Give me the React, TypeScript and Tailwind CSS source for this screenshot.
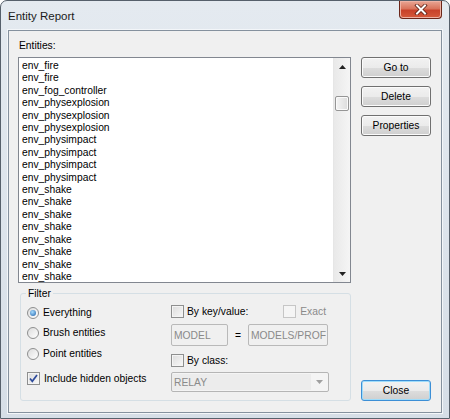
import React from "react";

const entities: string[] = [
  "env_fire",
  "env_fire",
  "env_fog_controller",
  "env_physexplosion",
  "env_physexplosion",
  "env_physexplosion",
  "env_physimpact",
  "env_physimpact",
  "env_physimpact",
  "env_physimpact",
  "env_shake",
  "env_shake",
  "env_shake",
  "env_shake",
  "env_shake",
  "env_shake",
  "env_shake",
  "env_shake",
];

const buttonClass =
  "flex h-[21px] w-[70px] items-center justify-center rounded-[3px] border border-[#707070] bg-[linear-gradient(#f2f2f2_0%,#ebebeb_50%,#dddddd_51%,#cfcfcf_100%)] text-[10.3px] text-black shadow-[inset_0_0_0_1px_#fbfbfb]";

function Radio({ checked }: { checked?: boolean }) {
  return (
    <span className="flex h-[12px] w-[12px] items-center justify-center rounded-full border border-[#8e8f8f] bg-[linear-gradient(135deg,#dcdcdc,#ffffff)]">
      {checked && (
        <span className="h-[6px] w-[6px] rounded-full bg-[radial-gradient(circle_at_40%_35%,#a6dcff,#1d5fa8)]" />
      )}
    </span>
  );
}

function Check({ checked, disabled }: { checked?: boolean; disabled?: boolean }) {
  return (
    <span
      className={
        disabled
          ? "flex h-[13px] w-[13px] items-center justify-center border border-[#c6c6c6] bg-[#f5f5f5]"
          : "flex h-[13px] w-[13px] items-center justify-center border border-[#8e8f8f] bg-[linear-gradient(135deg,#dcdcdc,#f8f8f8)] shadow-[inset_0_0_0_1px_#f4f4f4]"
      }
    >
      {checked && (
        <svg width="11" height="11" viewBox="0 0 11 11">
          <path d="M2 5.5 L4.3 8.3 L9 2" fill="none" stroke="#2e4b9b" strokeWidth="1.7" />
        </svg>
      )}
    </span>
  );
}

export default function App(): JSX.Element {
  return (
    <div className="h-[419px] w-[450px] bg-white font-['Liberation_Sans',Arial,sans-serif] text-black">
      <div className="flex h-[419px] w-[450px] flex-col rounded-t-[7px] border border-[#56606b] bg-[linear-gradient(#e4eaf0,#d6dee7)] px-[7px] pb-[5px]">
        {/* Title bar */}
        <div className="flex h-[29px] items-start">
          <span className="mt-[8px] text-[11.5px] leading-[14px] text-[#1b1b1b]">Entity Report</span>
          <button className="ml-auto flex h-[18px] w-[43px] items-center justify-center rounded-b-[4px] border border-t-0 border-[#6b2619] bg-[linear-gradient(#e9a695_0%,#d9745c_45%,#c8422a_55%,#d55a3b_100%)] shadow-[inset_0_0_0_1px_#eeb2a4]">
            <svg width="14" height="11" viewBox="0 0 14 11">
              <path d="M3 1.5 L11 9.5 M11 1.5 L3 9.5" stroke="#5a1e12" strokeWidth="3.6" strokeLinecap="square" />
              <path d="M3 1.5 L11 9.5 M11 1.5 L3 9.5" stroke="#ffffff" strokeWidth="2" strokeLinecap="square" />
            </svg>
          </button>
        </div>

        {/* Client area */}
        <div className="flex flex-1 border border-[#85919e] bg-[#f0f0f0] pl-[9px] pr-[10px] shadow-[0_0_0_1px_#f3f6f9]">
          <div className="flex w-[333px] flex-col pt-[8px]">
            <span className="ml-[1px] text-[10.3px] leading-[13px]">Entities:</span>

            {/* List box */}
            <div className="mt-[5px] flex h-[226px] w-[333px] border border-[#828790] bg-white">
              <div className="flex-1 overflow-hidden pl-[3px] pt-[2px]">
                {entities.map((name, i) => (
                  <div key={i} className="whitespace-nowrap text-[10.3px] leading-[12.4px]">
                    {name}
                  </div>
                ))}
              </div>
              <div className="flex w-[17px] flex-col items-center border-l border-[#e6e6e6] bg-[linear-gradient(90deg,#e9e9e9,#f5f5f5)]">
                <div className="flex h-[17px] w-full items-center justify-center">
                  <svg width="7" height="4" viewBox="0 0 7 4">
                    <path d="M0 4 L3.5 0 L7 4 Z" fill="#222" />
                  </svg>
                </div>
                <div className="mt-[21px] h-[15px] w-[14px] rounded-[2px] border border-[#959595] bg-[linear-gradient(90deg,#f4f4f4,#dcdcdc)] shadow-[inset_0_0_0_1px_#fafafa]" />
                <div className="mt-auto flex h-[17px] w-full items-center justify-center">
                  <svg width="7" height="4" viewBox="0 0 7 4">
                    <path d="M0 0 L7 0 L3.5 4 Z" fill="#222" />
                  </svg>
                </div>
              </div>
            </div>

            {/* Filter group */}
            <fieldset className="ml-[2px] mt-[4px] h-[114px] w-[331px] rounded-[3px] border border-[#d5dfe5]">
              <legend className="ml-[5px] px-[2px] text-[10.3px] leading-[13px]">Filter</legend>
              <div className="flex">
                <div className="flex w-[150px] flex-col pl-[6px] pt-[6px] text-[10.3px] leading-[13px]">
                  <div className="flex items-center gap-[4px]">
                    <Radio checked />
                    <span>Everything</span>
                  </div>
                  <div className="mt-[7px] flex items-center gap-[4px]">
                    <Radio />
                    <span>Brush entities</span>
                  </div>
                  <div className="mt-[8px] flex items-center gap-[4px]">
                    <Radio />
                    <span>Point entities</span>
                  </div>
                  <div className="mt-[12px] flex items-center gap-[4px]">
                    <Check checked />
                    <span>Include hidden objects</span>
                  </div>
                </div>

                <div className="flex flex-col pt-[5px] text-[10.3px] leading-[13px]">
                  <div className="flex items-center">
                    <Check />
                    <span className="ml-[3px]">By key/value:</span>
                    <span className="ml-[35px]">
                      <Check disabled />
                    </span>
                    <span className="ml-[4px] text-[#8a8a8a]">Exact</span>
                  </div>
                  <div className="mt-[6px] flex items-center">
                    <div className="flex h-[22px] w-[57px] items-center rounded-[2px] border border-[#b9b9b9] bg-[#f0f0f0] pl-[2px] text-[#8a8a8a]">
                      MODEL
                    </div>
                    <span className="w-[20px] text-center">=</span>
                    <div className="flex h-[22px] w-[80px] items-center overflow-hidden whitespace-nowrap rounded-[2px] border border-[#b9b9b9] bg-[#f0f0f0] pl-[2px] text-[#8a8a8a]">
                      MODELS/PROF
                    </div>
                  </div>
                  <div className="mt-[8px] flex items-center">
                    <Check />
                    <span className="ml-[3px]">By class:</span>
                  </div>
                  <div className="mt-[5px] flex h-[20px] w-[158px] items-center rounded-[2px] border border-[#b5b5b5] bg-[#f4f4f4]">
                    <span className="flex h-[16px] flex-1 items-center bg-[#ececec] pl-[2px] text-[#8a8a8a]">RELAY</span>
                    <span className="flex w-[17px] items-center justify-center">
                      <svg width="7" height="4" viewBox="0 0 7 4">
                        <path d="M0 0 L7 0 L3.5 4 Z" fill="#a0a0a0" />
                      </svg>
                    </span>
                  </div>
                </div>
              </div>
            </fieldset>
          </div>

          {/* Right buttons */}
          <div className="ml-[10px] flex w-[70px] flex-col pb-[11px] pt-[26px]">
            <button className={buttonClass}>Go to</button>
            <button className={`${buttonClass} mt-[8px]`}>Delete</button>
            <button className={`${buttonClass} mt-[8px]`}>Properties</button>
            <button className="mt-auto flex h-[21px] w-[70px] items-center justify-center rounded-[3px] border border-[#3c8fd6] bg-[linear-gradient(#f2f2f2_0%,#ebebeb_50%,#dddddd_51%,#cfcfcf_100%)] text-[10.3px] text-black shadow-[inset_0_0_0_1px_#9fdcfa]">
              Close
            </button>
          </div>
        </div>
      </div>
    </div>
  );
}
